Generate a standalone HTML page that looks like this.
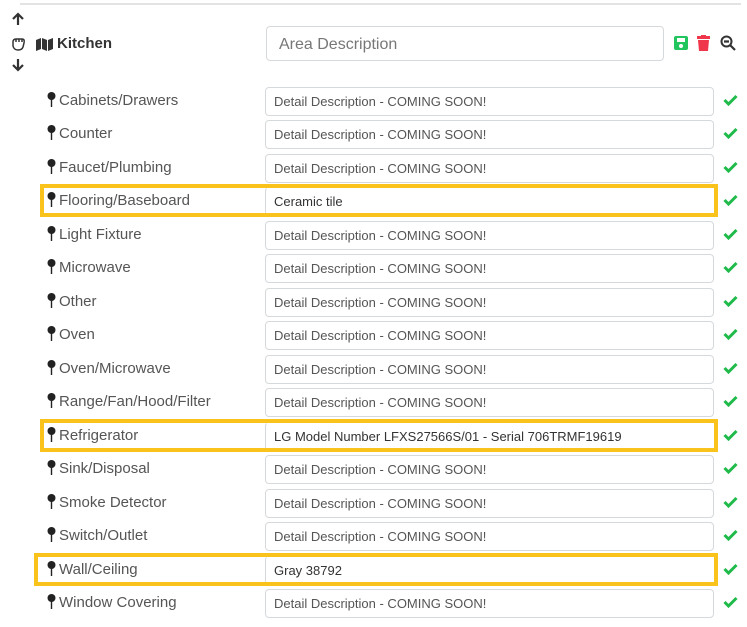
<!DOCTYPE html>
<html><head><style>
body{margin:0;background:#fff;font-family:"Liberation Sans",sans-serif;width:747px;height:627px;overflow:hidden;position:relative}
.a{position:absolute}
.top{left:20px;top:3px;width:721px;height:2px;background:#e3e3e3}
.lbl{position:absolute;left:47px;font-size:15px;color:#555;line-height:20px}
.lbl svg{vertical-align:-2px;margin-right:3px}
.inp{position:absolute;left:265px;width:449px;height:29px;border:1px solid #d6d9dc;border-radius:4px;font-size:13px;color:#555;line-height:27px;padding-left:8px;box-sizing:border-box}
.inp.v{color:#333}
.chk{position:absolute;left:723px}
.hl{position:absolute;border:4px solid #f9c31b;box-sizing:border-box}
</style></head><body>
<div class="a top"></div>
<svg class="a" style="left:11px;top:12px" width="14" height="14" viewBox="0 0 14 14"><path d="M7 13V2M2 7L7 2L12 7" fill="none" stroke="#333" stroke-width="2.2"/></svg>
<svg class="a" style="left:11px;top:58px" width="14" height="14" viewBox="0 0 14 14"><path d="M7 1V12M2 7L7 12L12 7" fill="none" stroke="#333" stroke-width="2.2"/></svg>
<svg class="a" style="left:11px;top:37px" width="15" height="14" viewBox="0 0 15 14"><path d="M2 5 Q2 2 5 2 L11 2 Q14 2 13 6 L12 10 Q11 13 7 13 Q3 13 2 9 Z M5 2 V5 M8 2 V5 M11 2 V5" fill="none" stroke="#333" stroke-width="1.5"/></svg>
<svg class="a" style="left:36px;top:37px" width="17" height="14" viewBox="0 0 17 14"><path d="M0 3 L5 1 V12 L0 14Z M6 1 L11 3 V14 L6 12Z M12 3 L17 1 V12 L12 14Z" fill="#333"/></svg>
<div class="a" style="left:57px;top:35px;font-size:15px;font-weight:bold;color:#333">Kitchen</div>
<div class="a" style="left:266px;top:26px;height:35px;border:1px solid #d6d9dc;border-radius:4px;font-size:16px;color:#777;line-height:35px;padding-left:12px;box-sizing:border-box;width:398px">Area Description</div>
<svg class="a" style="left:674px;top:36px" width="14" height="14" viewBox="0 0 14 14"><rect x="0" y="0" width="14" height="14" rx="2" fill="#22c55e"/><rect x="3" y="2" width="8" height="4" fill="#fff"/><circle cx="7" cy="10" r="2" fill="#fff"/></svg>
<svg class="a" style="left:697px;top:35px" width="13" height="16" viewBox="0 0 13 16"><rect x="0" y="1" width="13" height="3" fill="#f0364a"/><rect x="4" y="0" width="5" height="2" fill="#f0364a"/><path d="M1 5 H12 L11 16 H2Z" fill="#f0364a"/></svg>
<svg class="a" style="left:720px;top:35px" width="16" height="16" viewBox="0 0 16 16"><circle cx="6.5" cy="6.5" r="5" fill="none" stroke="#333" stroke-width="2"/><path d="M4 6.5H9M10 10L15 15" stroke="#333" stroke-width="2.2"/></svg>
<div id="rows"></div>
<script>
const items=[["Cabinets/Drawers"],["Counter"],["Faucet/Plumbing"],["Flooring/Baseboard","Ceramic tile"],["Light Fixture"],["Microwave"],["Other"],["Oven"],["Oven/Microwave"],["Range/Fan/Hood/Filter"],["Refrigerator","LG Model Number LFXS27566S/01 - Serial 706TRMF19619"],["Sink/Disposal"],["Smoke Detector"],["Switch/Outlet"],["Wall/Ceiling","Gray 38792"],["Window Covering"]];
let h="";
items.forEach((it,i)=>{const c=101+i*33.47;
const pin='<svg width="9" height="15" viewBox="0 0 9 15"><circle cx="4.5" cy="4" r="4" fill="#222"/><rect x="3.8" y="6" width="1.4" height="9" fill="#222"/></svg>';
h+=`<div class="lbl" style="top:${c-10}px">${pin}${it[0]}</div>`;
if(it[1]){h+=`<div class="inp v" style="top:${c-14}px;border-color:transparent;border-left-color:#d6d9dc">${it[1]}</div>`;
const l=i==14?34:40;h+=`<div class="hl" style="left:${l}px;top:${c-17}px;width:${718-l}px;height:33px"></div>`;}
else h+=`<div class="inp" style="top:${c-14}px">Detail Description - COMING SOON!</div>`;
h+=`<svg class="chk" style="top:${c-7}px" width="15" height="12" viewBox="0 0 15 12"><path d="M1.5 6 L5.5 10 L13.5 2" fill="none" stroke="#1fba4a" stroke-width="3"/></svg>`;});
document.getElementById("rows").innerHTML=h;
</script>
</body></html>
